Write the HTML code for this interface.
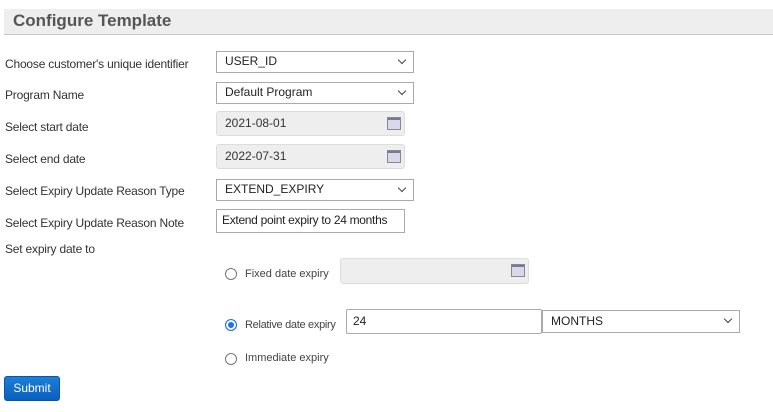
<!DOCTYPE html>
<html><head><style>
*{box-sizing:border-box;margin:0;padding:0}
body{width:773px;height:412px;background:#fff;font-family:"Liberation Sans",sans-serif;position:relative;overflow:hidden}
.hd{position:absolute;left:4px;top:9px;width:769px;height:26px;background:#eee;border-bottom:1px solid #c8c8c8}
.hd span{position:absolute;left:9px;top:2px;font-size:17px;font-weight:bold;color:#555}
.l{position:absolute;left:5px;font-size:12px;color:#333;white-space:nowrap;letter-spacing:-0.2px}
.b{position:absolute;border:1px solid #aaa;background:#fff;font-size:12px;color:#222;padding-left:8px;line-height:19px;white-space:nowrap;overflow:hidden}
.s::after{content:"";position:absolute;right:8px;top:5px;width:5px;height:5px;border-right:1.6px solid #444;border-bottom:1.6px solid #444;transform:rotate(45deg)}
.d{background:#eee;border-color:#ddd;border-radius:3px;line-height:23px;color:#333}
.cal{position:absolute;right:3px;top:5px;width:14px;height:13px;background:#d8d8e8;border:1px solid #889}
.cal::before{content:"";position:absolute;left:0;top:0;right:0;height:2px;background:#779}
.r{position:absolute;width:12px;height:12px;border:1px solid #777;border-radius:50%;left:225px}
.rl{position:absolute;left:245px;font-size:11px;color:#444;white-space:nowrap}
</style></head><body>
<div class="hd"><span>Configure Template</span></div>
<div class="l" style="top:57px">Choose customer's unique identifier</div>
<div class="l" style="top:88px">Program Name</div>
<div class="l" style="top:120px">Select start date</div>
<div class="l" style="top:152px">Select end date</div>
<div class="l" style="top:184px">Select Expiry Update Reason Type</div>
<div class="l" style="top:216px">Select Expiry Update Reason Note</div>
<div class="l" style="top:242px">Set expiry date to</div>

<div class="b s" style="left:216px;top:51px;width:198px;height:22px">USER_ID</div>
<div class="b s" style="left:216px;top:82px;width:198px;height:22px">Default Program</div>
<div class="b d" style="left:216px;top:111px;width:189px;height:25px">2021-08-01<div class="cal"></div></div>
<div class="b d" style="left:216px;top:144px;width:189px;height:25px">2022-07-31<div class="cal"></div></div>
<div class="b s" style="left:216px;top:179px;width:198px;height:22px">EXTEND_EXPIRY</div>
<div class="b" style="left:216px;top:209px;width:189px;height:24px;padding-left:5px;line-height:21px;letter-spacing:-0.3px">Extend point expiry to 24 months</div>

<div class="r" style="top:268px"></div>
<div class="rl" style="top:268px">Fixed date expiry</div>
<div class="b d" style="left:340px;top:258px;width:189px;height:26px"><div class="cal"></div></div>

<div class="r" style="top:319px;border:1px solid #1a73e8;background:#1a73e8;box-shadow:inset 0 0 0 2px #fff"></div>
<div class="rl" style="top:319px;letter-spacing:-0.3px">Relative date expiry</div>
<div class="b" style="left:346px;top:309px;width:196px;height:25px;border-radius:2px;padding-left:6px;line-height:22px">24</div>
<div class="b s" style="left:542px;top:310px;width:198px;height:23px;line-height:21px">MONTHS</div>

<div class="r" style="top:353px"></div>
<div class="rl" style="top:352px">Immediate expiry</div>

<div style="position:absolute;left:4px;top:376px;width:56px;height:25px;border-radius:3px;background:linear-gradient(#1c7fd6,#0a5fbf);border:1px solid #0a55aa;color:#fff;font-size:12px;text-align:center;line-height:23px">Submit</div>
</body></html>
